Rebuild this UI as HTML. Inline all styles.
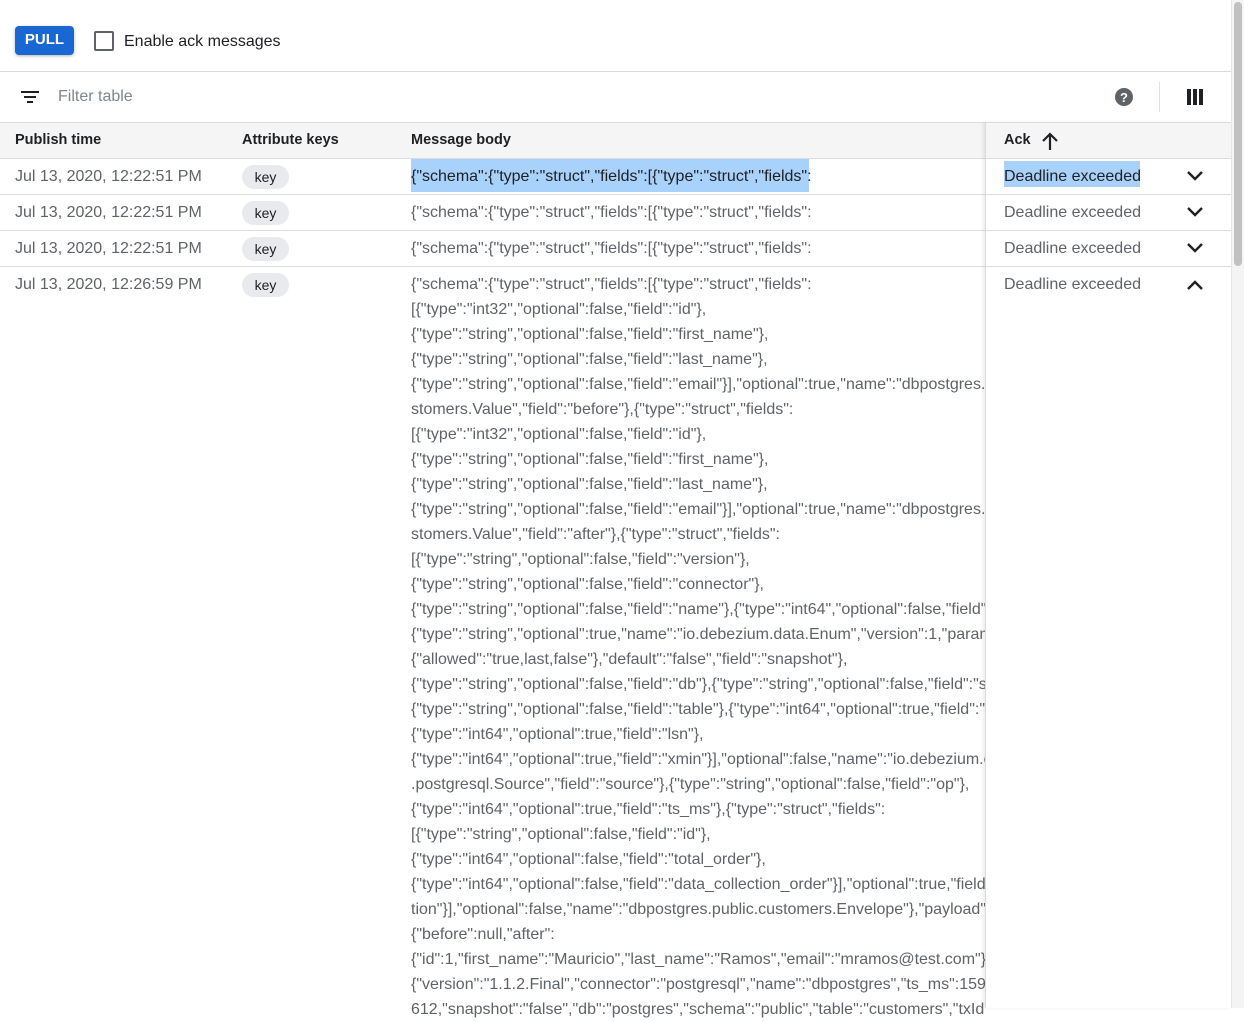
<!DOCTYPE html>
<html><head><meta charset="utf-8"><style>
*{box-sizing:border-box;margin:0;padding:0}
body{width:1244px;height:1008px;overflow:hidden;background:#fff;font-family:"Liberation Sans",Arial,sans-serif;color:#202124;position:relative}
.abs{position:absolute}
.pull{left:15px;top:26px;width:59px;height:29px;background:#1967d2;border-radius:4px;color:#fff;font-weight:bold;font-size:15px;text-align:center;line-height:28px;box-shadow:0 1px 3px rgba(0,0,0,.3)}
.cb{left:94px;top:31px;width:20px;height:20px;border:2px solid #5f6368;border-radius:2px}
.t16{font-size:16px}
.hline{left:0;width:1231px;height:1px;background:#dadce0}
.gray{color:#5f6368}
.chip{width:47px;height:24px;background:#e8eaed;border-radius:12px;text-align:center;line-height:24px;font-size:14px;color:#202124}
.mb{left:411px;width:574px;overflow:hidden;white-space:nowrap;font-size:16px;color:#5f6368;line-height:25px;letter-spacing:0}
.ack{left:985px;width:246px;top:122px;bottom:0;border-left:1px solid #dadce0;box-shadow:-2px 0 3px rgba(0,0,0,.08);background:#fff}
.hd{font-size:14.5px;font-weight:bold;color:#202124}
</style></head><body>
<div class="abs pull">PULL</div>
<div class="abs cb"></div>
<div class="abs t16" style="left:124px;top:33px">Enable ack messages</div>
<div class="abs hline" style="top:71px"></div>
<svg class="abs" style="left:21px;top:90px" width="18" height="14"><rect x="0" y="1" width="18" height="2" fill="#202124"/><rect x="3" y="6" width="12" height="2" fill="#202124"/><rect x="6" y="11" width="6" height="2" fill="#202124"/></svg>
<div class="abs t16" style="left:58px;top:88px;color:#80868b">Filter table</div>
<svg class="abs" style="left:1114px;top:87px" width="20" height="20"><circle cx="10" cy="10" r="9" fill="#5f6368"/><text x="10" y="15" font-size="13" font-weight="bold" fill="#fff" text-anchor="middle" font-family="Liberation Sans">?</text></svg>
<div class="abs" style="left:1159px;top:82px;width:1px;height:30px;background:#e0e0e0"></div>
<svg class="abs" style="left:1187px;top:89px" width="16" height="16"><rect x="0" y="0" width="4" height="16" fill="#202124"/><rect x="6" y="0" width="4" height="16" fill="#202124"/><rect x="12" y="0" width="4" height="16" fill="#202124"/></svg>
<div class="abs" style="left:0;top:122px;width:1231px;height:37px;background:#f5f5f5;border-top:1px solid #dadce0;border-bottom:1px solid #dadce0"></div>
<div class="abs hd" style="left:15px;top:132px">Publish time</div>
<div class="abs hd" style="left:242px;top:132px">Attribute keys</div>
<div class="abs hd" style="left:411px;top:132px">Message body</div>
<div class="abs hline" style="top:194px"></div>
<div class="abs hline" style="top:230px"></div>
<div class="abs hline" style="top:266px"></div>
<div class="abs t16 gray" style="left:15px;top:168px">Jul 13, 2020, 12:22:51 PM</div>
<div class="abs t16 gray" style="left:15px;top:204px">Jul 13, 2020, 12:22:51 PM</div>
<div class="abs t16 gray" style="left:15px;top:240px">Jul 13, 2020, 12:22:51 PM</div>
<div class="abs t16 gray" style="left:15px;top:276px">Jul 13, 2020, 12:26:59 PM</div>
<div class="abs chip" style="left:242px;top:165px">key</div>
<div class="abs chip" style="left:242px;top:201px">key</div>
<div class="abs chip" style="left:242px;top:237px">key</div>
<div class="abs chip" style="left:242px;top:273px">key</div>
<div class="abs" style="left:411px;top:159px;width:398px;height:33px;background:#a8d1fb"></div>
<div class="abs mb" style="top:164px;color:#202124">{"schema":{"type":"struct","fields":[{"type":"struct","fields":</div>
<div class="abs mb" style="top:200px">{"schema":{"type":"struct","fields":[{"type":"struct","fields":</div>
<div class="abs mb" style="top:236px">{"schema":{"type":"struct","fields":[{"type":"struct","fields":</div>
<div class="abs mb" style="top:272px">{"schema":{"type":"struct","fields":[{"type":"struct","fields":<br>[{"type":"int32","optional":false,"field":"id"},<br>{"type":"string","optional":false,"field":"first_name"},<br>{"type":"string","optional":false,"field":"last_name"},<br>{"type":"string","optional":false,"field":"email"}],"optional":true,"name":"dbpostgres.public.cu<br>stomers.Value","field":"before"},{"type":"struct","fields":<br>[{"type":"int32","optional":false,"field":"id"},<br>{"type":"string","optional":false,"field":"first_name"},<br>{"type":"string","optional":false,"field":"last_name"},<br>{"type":"string","optional":false,"field":"email"}],"optional":true,"name":"dbpostgres.public.cu<br>stomers.Value","field":"after"},{"type":"struct","fields":<br>[{"type":"string","optional":false,"field":"version"},<br>{"type":"string","optional":false,"field":"connector"},<br>{"type":"string","optional":false,"field":"name"},{"type":"int64","optional":false,"field":"ts_ms"},<br>{"type":"string","optional":true,"name":"io.debezium.data.Enum","version":1,"parameters":<br>{"allowed":"true,last,false"},"default":"false","field":"snapshot"},<br>{"type":"string","optional":false,"field":"db"},{"type":"string","optional":false,"field":"schema"},<br>{"type":"string","optional":false,"field":"table"},{"type":"int64","optional":true,"field":"txId"},<br>{"type":"int64","optional":true,"field":"lsn"},<br>{"type":"int64","optional":true,"field":"xmin"}],"optional":false,"name":"io.debezium.connector<br>.postgresql.Source","field":"source"},{"type":"string","optional":false,"field":"op"},<br>{"type":"int64","optional":true,"field":"ts_ms"},{"type":"struct","fields":<br>[{"type":"string","optional":false,"field":"id"},<br>{"type":"int64","optional":false,"field":"total_order"},<br>{"type":"int64","optional":false,"field":"data_collection_order"}],"optional":true,"field":"transac<br>tion"}],"optional":false,"name":"dbpostgres.public.customers.Envelope"},"payload":<br>{"before":null,"after":<br>{"id":1,"first_name":"Mauricio","last_name":"Ramos","email":"mramos@test.com"},"source":<br>{"version":"1.1.2.Final","connector":"postgresql","name":"dbpostgres","ts_ms":1594<br>612,"snapshot":"false","db":"postgres","schema":"public","table":"customers","txId":</div>
<div class="abs ack">
<div class="abs" style="left:0;top:0;width:245px;height:37px;background:#f5f5f5;border-top:1px solid #dadce0;border-bottom:1px solid #dadce0"></div>
<div class="abs hd" style="left:18px;top:10px">Ack</div>
<svg class="abs" style="left:55px;top:9px" width="18" height="20"><path d="M9 3V19M2 10L9 3L16 10" stroke="#202124" stroke-width="2.2" fill="none"/></svg>
<div class="abs" style="left:0;top:72px;width:245px;height:1px;background:#dadce0"></div>
<div class="abs" style="left:0;top:108px;width:245px;height:1px;background:#dadce0"></div>
<div class="abs" style="left:0;top:144px;width:245px;height:1px;background:#dadce0"></div>
<div class="abs" style="left:18px;top:39px;width:136px;height:26px;background:#a8d1fb"></div>
<div class="abs t16" style="left:18px;top:46px">Deadline exceeded</div>
<div class="abs t16 gray" style="left:18px;top:82px">Deadline exceeded</div>
<div class="abs t16 gray" style="left:18px;top:118px">Deadline exceeded</div>
<div class="abs t16 gray" style="left:18px;top:154px">Deadline exceeded</div>
<svg class="abs" style="left:200px;top:48px" width="18" height="12"><path d="M2 2L9 9L16 2" stroke="#202124" stroke-width="2.4" fill="none"/></svg>
<svg class="abs" style="left:200px;top:84px" width="18" height="12"><path d="M2 2L9 9L16 2" stroke="#202124" stroke-width="2.4" fill="none"/></svg>
<svg class="abs" style="left:200px;top:120px" width="18" height="12"><path d="M2 2L9 9L16 2" stroke="#202124" stroke-width="2.4" fill="none"/></svg>
<svg class="abs" style="left:200px;top:157px" width="18" height="12"><path d="M2 10L9 3L16 10" stroke="#202124" stroke-width="2.4" fill="none"/></svg>
</div>
<div class="abs" style="left:1231px;top:0;width:13px;height:1008px;background:#f4f4f4;border-left:1px solid #e6e6e6"></div>
<div class="abs" style="left:1234px;top:2px;width:8px;height:264px;background:#c1c1c1;border-radius:4px"></div>
</body></html>
